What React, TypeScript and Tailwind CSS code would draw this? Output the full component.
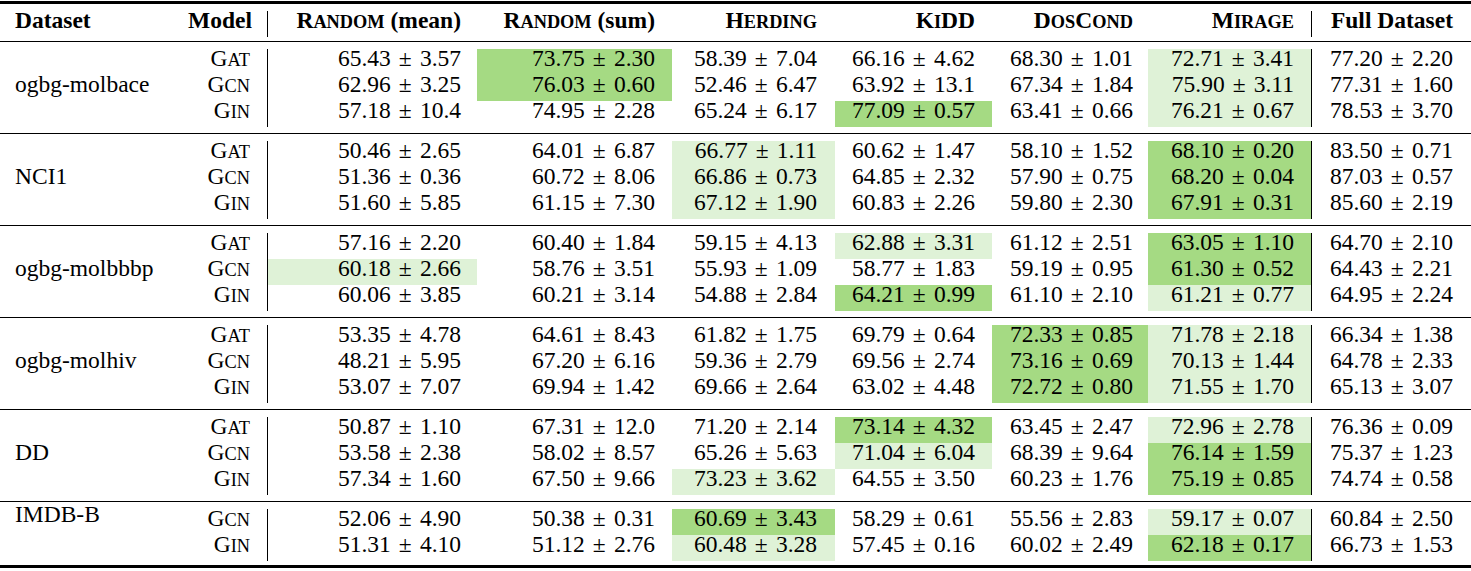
import React from "react"

type Hl = "d" | "l" | ""

type Row = {
    model: string
    vals: string[]
    hl: Hl[]
}

type Group = {
    name: string
    labelRow: number
    rows: Row[]
}

const groups: Group[] = [
    {
        name: "ogbg-molbace",
        labelRow: 1,
        rows: [
            { model: "Gat", vals: ["65.43|3.57", "73.75|2.30", "58.39|7.04", "66.16|4.62", "68.30|1.01", "72.71|3.41", "77.20|2.20"], hl: ["", "d", "", "", "", "l", ""] },
            { model: "Gcn", vals: ["62.96|3.25", "76.03|0.60", "52.46|6.47", "63.92|13.1", "67.34|1.84", "75.90|3.11", "77.31|1.60"], hl: ["", "d", "", "", "", "l", ""] },
            { model: "Gin", vals: ["57.18|10.4", "74.95|2.28", "65.24|6.17", "77.09|0.57", "63.41|0.66", "76.21|0.67", "78.53|3.70"], hl: ["", "", "", "d", "", "l", ""] },
        ],
    },
    {
        name: "NCI1",
        labelRow: 1,
        rows: [
            { model: "Gat", vals: ["50.46|2.65", "64.01|6.87", "66.77|1.11", "60.62|1.47", "58.10|1.52", "68.10|0.20", "83.50|0.71"], hl: ["", "", "l", "", "", "d", ""] },
            { model: "Gcn", vals: ["51.36|0.36", "60.72|8.06", "66.86|0.73", "64.85|2.32", "57.90|0.75", "68.20|0.04", "87.03|0.57"], hl: ["", "", "l", "", "", "d", ""] },
            { model: "Gin", vals: ["51.60|5.85", "61.15|7.30", "67.12|1.90", "60.83|2.26", "59.80|2.30", "67.91|0.31", "85.60|2.19"], hl: ["", "", "l", "", "", "d", ""] },
        ],
    },
    {
        name: "ogbg-molbbbp",
        labelRow: 1,
        rows: [
            { model: "Gat", vals: ["57.16|2.20", "60.40|1.84", "59.15|4.13", "62.88|3.31", "61.12|2.51", "63.05|1.10", "64.70|2.10"], hl: ["", "", "", "l", "", "d", ""] },
            { model: "Gcn", vals: ["60.18|2.66", "58.76|3.51", "55.93|1.09", "58.77|1.83", "59.19|0.95", "61.30|0.52", "64.43|2.21"], hl: ["l", "", "", "", "", "d", ""] },
            { model: "Gin", vals: ["60.06|3.85", "60.21|3.14", "54.88|2.84", "64.21|0.99", "61.10|2.10", "61.21|0.77", "64.95|2.24"], hl: ["", "", "", "d", "", "l", ""] },
        ],
    },
    {
        name: "ogbg-molhiv",
        labelRow: 1,
        rows: [
            { model: "Gat", vals: ["53.35|4.78", "64.61|8.43", "61.82|1.75", "69.79|0.64", "72.33|0.85", "71.78|2.18", "66.34|1.38"], hl: ["", "", "", "", "d", "l", ""] },
            { model: "Gcn", vals: ["48.21|5.95", "67.20|6.16", "59.36|2.79", "69.56|2.74", "73.16|0.69", "70.13|1.44", "64.78|2.33"], hl: ["", "", "", "", "d", "l", ""] },
            { model: "Gin", vals: ["53.07|7.07", "69.94|1.42", "69.66|2.64", "63.02|4.48", "72.72|0.80", "71.55|1.70", "65.13|3.07"], hl: ["", "", "", "", "d", "l", ""] },
        ],
    },
    {
        name: "DD",
        labelRow: 1,
        rows: [
            { model: "Gat", vals: ["50.87|1.10", "67.31|12.0", "71.20|2.14", "73.14|4.32", "63.45|2.47", "72.96|2.78", "76.36|0.09"], hl: ["", "", "", "d", "", "l", ""] },
            { model: "Gcn", vals: ["53.58|2.38", "58.02|8.57", "65.26|5.63", "71.04|6.04", "68.39|9.64", "76.14|1.59", "75.37|1.23"], hl: ["", "", "", "l", "", "d", ""] },
            { model: "Gin", vals: ["57.34|1.60", "67.50|9.66", "73.23|3.62", "64.55|3.50", "60.23|1.76", "75.19|0.85", "74.74|0.58"], hl: ["", "", "l", "", "", "d", ""] },
        ],
    },
    {
        name: "IMDB-B",
        labelRow: 0,
        rows: [
            { model: "Gcn", vals: ["52.06|4.90", "50.38|0.31", "60.69|3.43", "58.29|0.61", "55.56|2.83", "59.17|0.07", "60.84|2.50"], hl: ["", "", "d", "", "", "l", ""] },
            { model: "Gin", vals: ["51.31|4.10", "51.12|2.76", "60.48|3.28", "57.45|0.16", "60.02|2.49", "62.18|0.17", "66.73|1.53"], hl: ["", "", "l", "", "", "d", ""] },
        ],
    },
]

const grid = "grid grid-cols-[160px_108px_209px_195px_163px_157px_156px_164px_159px]"

// every text cell names the font itself
const cellBase = "[font-family:Liberation_Serif,serif] text-[23.5px] h-[26px] leading-[19px] whitespace-nowrap"

// right padding per value column, so the right edges land where the reference has them
const valPad = ["pr-[16px]", "pr-[17px]", "pr-[18px]", "pr-[17px]", "pr-[15px]", "pr-[17px]", "pr-[18px]"]

// small caps like LaTeX \textsc: capitals full size, lower case as smaller capitals
function SC({ t }: { t: string }) {
    const parts: { big: boolean; s: string }[] = []
    for (const ch of t) {
        const big = ch === ch.toUpperCase()
        const last = parts[parts.length - 1]
        if (last && last.big === big) last.s += ch
        else parts.push({ big, s: ch })
    }
    return (
        <span>
            {parts.map((p, i) =>
                p.big ? <span key={i}>{p.s}</span> : <span key={i} className="text-[0.78em]">{p.s.toUpperCase()}</span>
            )}
        </span>
    )
}

function Num({ v }: { v: string }) {
    const [a, b] = v.split("|")
    return (
        <span>
            {a}
            <span className="inline-block w-[0.8em] mx-[0.22em] text-center">±</span>
            {b}
        </span>
    )
}

function Rule({ thick }: { thick?: boolean }) {
    return <div className={thick ? "h-[2.5px] bg-black" : "h-[1.5px] bg-black"} />
}

function Header() {
    const cell = `${cellBase} text-right`
    return (
        <div className={`${grid} pt-[7px] pb-[4px] font-bold`}>
            <div className={`${cellBase} pl-[15px]`}>Dataset</div>
            <div className={`${cell} pr-[15px] border-r border-black`}>Model</div>
            <div className={`${cell} ${valPad[0]}`}><SC t="Random" /> (mean)</div>
            <div className={`${cell} ${valPad[1]}`}><SC t="Random" /> (sum)</div>
            <div className={`${cell} ${valPad[2]}`}><SC t="Herding" /></div>
            <div className={`${cell} ${valPad[3]}`}><SC t="KiDD" /></div>
            <div className={`${cell} ${valPad[4]}`}><SC t="DosCond" /></div>
            <div className={`${cell} ${valPad[5]} border-r border-black`}><SC t="Mirage" /></div>
            <div className={`${cell} ${valPad[6]}`}>Full Dataset</div>
        </div>
    )
}

function GroupBlock({ g, last }: { g: Group; last: boolean }) {
    return (
        <div className={`${grid} pt-[7px] ${last ? "pb-[4px]" : "pb-[5.5px]"}`}>
            {g.rows.map((r, ri) => (
                <React.Fragment key={ri}>
                    <div className={`${cellBase} pl-[15px]`}>
                        {ri === g.labelRow && (
                            <div className={g.rows.length === 2 ? "-mt-[4px]" : ""}>{g.name}</div>
                        )}
                    </div>
                    <div className={`${cellBase} text-right pr-[17px] border-r border-black`}>
                        <SC t={r.model} />
                    </div>
                    {r.vals.map((v, vi) => (
                        <div
                            key={vi}
                            className={[
                                cellBase,
                                "text-right",
                                valPad[vi],
                                vi === 5 ? "border-r border-black" : "",
                                r.hl[vi] === "d" ? "bg-[#a5da83]" : r.hl[vi] === "l" ? "bg-[#dff2d7]" : "",
                            ].join(" ")}
                        >
                            <Num v={v} />
                        </div>
                    ))}
                </React.Fragment>
            ))}
        </div>
    )
}

export default function App() {
    return (
        <div className="w-[1471px] h-[571px] bg-white text-black pt-[1px]">
            <Rule thick />
            <Header />
            <Rule />
            {groups.map((g, i) => (
                <React.Fragment key={g.name}>
                    <GroupBlock g={g} last={i === groups.length - 1} />
                    <Rule thick={i === groups.length - 1} />
                </React.Fragment>
            ))}
        </div>
    )
}
